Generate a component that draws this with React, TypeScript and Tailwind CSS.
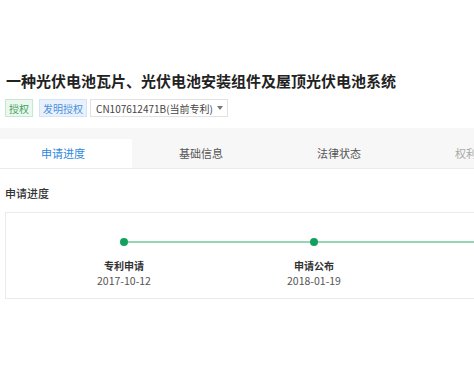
import React from "react";

const tabs = ["申请进度", "基础信息", "法律状态", "权利要求"];

const steps = [
  { title: "专利申请", date: "2017-10-12" },
  { title: "申请公布", date: "2018-01-19" },
];

export default function App() {
  return (
    <div
      className="w-[474px] h-[372px] overflow-hidden bg-white text-[#333]"
      style={{ fontFamily: '"Noto Sans CJK SC", "Noto Sans", sans-serif' }}
    >
      <div className="pt-[70px] pl-[6px]">
        <h1 className="text-[15px] leading-[22px] font-bold text-[#222] whitespace-nowrap">
          一种光伏电池瓦片、光伏电池安装组件及屋顶光伏电池系统
        </h1>
        <div className="mt-[7px] flex items-center">
          <span className="ml-[-1px] h-[18px] px-[3px] flex items-center text-[10px] text-[#3fa35f] bg-[#ecf7ef] border border-[#c5e8cf]">
            授权
          </span>
          <span className="ml-[6px] h-[18px] px-[3px] flex items-center text-[10px] text-[#4b8fdc] bg-[#e9f2fc] border border-[#d3e4f8]">
            发明授权
          </span>
          <span className="ml-[3px] h-[18px] pl-[5px] pr-[4px] flex items-center gap-[4px] text-[10px] text-[#444] border border-[#e2e2e2] bg-white">
            CN107612471B(当前专利)
            <svg width="6" height="4" viewBox="0 0 6 4">
              <path d="M0 0h6L3 4z" fill="#777" />
            </svg>
          </span>
        </div>
      </div>

      <div className="mt-[11px] h-[41px] bg-[#f7f7f7] border-b border-[#ececec] flex items-end">
        <div className="ml-[-6px] flex">
          {tabs.map((t, i) => (
            <div
              key={t}
              className={`w-[138px] h-[29px] flex items-center justify-center text-[11px] whitespace-nowrap ${
                i === 0
                  ? "bg-white text-[#2d87e2]"
                  : i === 3
                  ? "text-[#aaa]"
                  : "text-[#555]"
              }`}
            >
              {t}
            </div>
          ))}
        </div>
      </div>

      <div className="pl-[5px]">
        <h2 className="mt-[16px] text-[11px] leading-[16px] font-medium text-[#333]">申请进度</h2>

        <div className="mt-[11px] w-[700px] h-[87px] border border-[#ebebeb] overflow-hidden">
          <div className="pl-[23px] pt-[25px] flex">
            {steps.map((s, i) => (
              <div key={s.title} className="w-[190px] flex flex-col items-center">
                <div className="w-full h-[8px] flex items-center">
                  <div className={`flex-1 h-[2px] ${i === 0 ? "" : "bg-[#93d5b6]"}`} />
                  <div className="w-[8px] h-[8px] rounded-full bg-[#12a05c]" />
                  <div className="flex-1 h-[2px] bg-[#93d5b6]" />
                </div>
                <div className="mt-[13px] text-[10px] leading-[14px] font-bold text-[#333]">{s.title}</div>
                <div className="mt-[1px] text-[10.5px] leading-[14px] text-[#555]">{s.date}</div>
              </div>
            ))}
            <div className="flex-1 h-[8px] flex items-center">
              <div className="w-full h-[2px] bg-[#93d5b6]" />
            </div>
          </div>
        </div>
      </div>
    </div>
  );
}
